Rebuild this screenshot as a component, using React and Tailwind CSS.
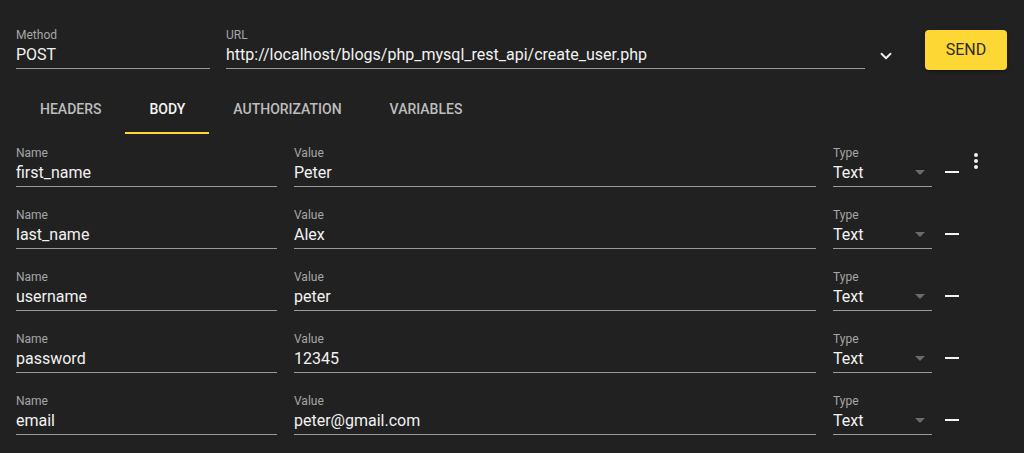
import { ChevronDown } from 'lucide-react';

const ROWS = [
  { name: 'first_name', value: 'Peter' },
  { name: 'last_name', value: 'Alex' },
  { name: 'username', value: 'peter' },
  { name: 'password', value: '12345' },
  { name: 'email', value: 'peter@gmail.com' },
];

const TABS = ['Headers', 'Body', 'Authorization', 'Variables'];

const Field = ({ label, value, className = '', children }) => (
  <div className={`flex flex-col ${className}`}>
    <span className="h-[14px] text-[12px] leading-[14px] text-[#a6a6a6]">{label}</span>
    <div className="mt-[3px] flex items-center border-b border-[#9a9a9a] pb-[4px] text-[16px] leading-[19px] text-[#f2f2f2]">
      <span className="flex-1 truncate">{value}</span>
      {children}
    </div>
  </div>
);

const App = () => {
  return (
    <div
      className="min-h-screen w-full bg-[#212121] px-4 pt-[28px]"
      style={{ fontFamily: 'Roboto, "Liberation Sans", sans-serif' }}
    >
      {/* Request line */}
      <div className="flex items-start">
        <Field label="Method" value="POST" className="w-[194px]" />
        <Field
          label="URL"
          value="http://localhost/blogs/php_mysql_rest_api/create_user.php"
          className="ml-4 w-[639px]"
        />
        <div className="flex w-[60px] justify-center pt-[19px] pr-[18px]">
          <ChevronDown size={18} strokeWidth={2.5} className="text-[#eeeeee]" />
        </div>
        <button className="mt-[2px] h-[40px] w-[82px] rounded-[4px] bg-[#fdd835] text-[16px] font-normal text-[#2b2b2b] shadow-[0_3px_1px_-2px_rgba(0,0,0,0.2),0_2px_2px_0_rgba(0,0,0,0.14),0_1px_5px_0_rgba(0,0,0,0.12)]">
          SEND
        </button>
      </div>

      {/* Tabs */}
      <div className="mt-[16px] flex h-[48px]">
        {TABS.map((t) => (
          <div
            key={t}
            className={`flex h-full flex-col items-center justify-center px-6 text-[14px] font-medium uppercase ${
              t === 'Body' ? 'text-[#f5f5f5]' : 'text-[#bdbdbd]'
            }`}
          >
            <span className="flex flex-1 items-center pt-[1px]">{t}</span>
            <span
              className={`h-[2px] w-[calc(100%+48px)] ${t === 'Body' ? 'bg-[#fdd835]' : 'bg-transparent'}`}
            />
          </div>
        ))}
      </div>

      {/* Body params */}
      <div className="mt-[12px] flex flex-col gap-[21px]">
        {ROWS.map((r, i) => (
          <div key={r.name} className="flex items-start">
            <Field label="Name" value={r.name} className="w-[261px]" />
            <Field label="Value" value={r.value} className="ml-[17px] w-[522px]" />
            <Field label="Type" value="Text" className="ml-[17px] w-[99px]">
              <span className="mr-[7px] h-0 w-0 border-x-[5px] border-t-[5px] border-x-transparent border-t-[#6b6b6b]" />
            </Field>
            <div className="ml-[13px] flex h-[41px] w-[14px] items-center pt-[11px]">
              <span className="h-[2px] w-[14px] bg-[#f2f2f2]" />
            </div>
            {i === 0 && (
              <div className="ml-[15px] flex flex-col gap-[2px] pt-[7px]">
                <span className="h-[4px] w-[4px] rounded-full bg-[#f2f2f2]" />
                <span className="h-[4px] w-[4px] rounded-full bg-[#f2f2f2]" />
                <span className="h-[4px] w-[4px] rounded-full bg-[#f2f2f2]" />
              </div>
            )}
          </div>
        ))}
      </div>
    </div>
  );
};

export default App;
